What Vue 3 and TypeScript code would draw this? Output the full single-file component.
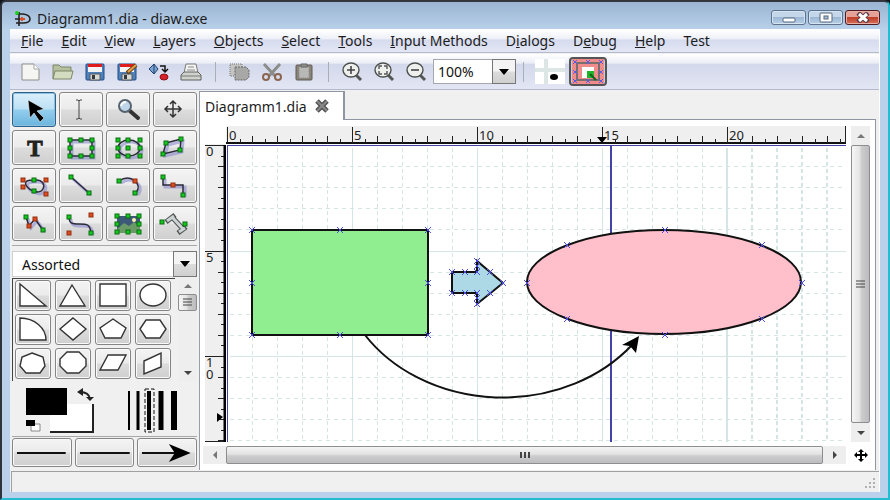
<script setup lang="ts">
import { computed, onBeforeUnmount, onMounted, reactive, ref } from 'vue'

interface Mark { x: number; y: number; red?: boolean }
interface Tool { name: string; path?: string; marks?: Mark[] }

const menus: [string, string, string][] = [
  ['', 'F', 'ile'], ['', 'E', 'dit'], ['', 'V', 'iew'], ['', 'L', 'ayers'],
  ['', 'O', 'bjects'], ['', 'S', 'elect'], ['', 'T', 'ools'], ['', 'I', 'nput Methods'],
  ['D', 'i', 'alogs'], ['D', 'e', 'bug'], ['', 'H', 'elp'], ['Test', '', ''],
]

const g = (x: number, y: number): Mark => ({ x, y })
const r = (x: number, y: number): Mark => ({ x, y, red: true })
const frame = (x0: number, x1: number, x2: number): Mark[] => [
  g(x0, 10), g(x1, 10), g(x2, 10), g(x0, 18), g(x2, 18), g(x0, 26), g(x1, 26), g(x2, 26),
]

const tools: Tool[] = [
  { name: 'Modify' },
  { name: 'Text edit' },
  { name: 'Magnify' },
  { name: 'Scroll' },
  { name: 'Text' },
  { name: 'Box', path: 'M11 10H33V26H11Z', marks: frame(11, 22, 33) },
  { name: 'Ellipse', path: 'M12 18A11 8 0 0 1 34 18A11 8 0 0 1 12 18Z', marks: [...frame(12, 22, 34), g(22, 18)] },
  { name: 'Polygon', path: 'M13 13L28 9L27 20L10 24Z', marks: [g(13, 13), g(28, 9), g(27, 20), g(10, 24)] },
  { name: 'Beziergon', path: 'M22 12C31 11 33 17 31 21C29 25 24 24 22 23C16 22 11 15 15 13C17 12 19 12 22 12Z', marks: [r(11, 12), r(11, 19), r(34, 12), r(34, 26), g(22, 12), g(22, 23)] },
  { name: 'Line', path: 'M12 9L30 25', marks: [g(12, 9), g(30, 25)] },
  { name: 'Arc', path: 'M13 13Q22 7 29 13Q35 18 30 25', marks: [g(13, 13), r(29, 13), g(29, 25)] },
  { name: 'Zigzagline', path: 'M10 9V17H30V27', marks: [g(10, 9), r(20, 17), g(30, 27)] },
  { name: 'Polyline', path: 'M14 11L17 20L23 13L31 24', marks: [g(14, 11), r(17, 20), r(23, 13), g(31, 24)] },
  { name: 'Bezierline', path: 'M10 11C10 18 14 18 20 18C28 18 31 18 32 27', marks: [g(10, 11), r(32, 9), r(10, 27), g(32, 27)] },
  { name: 'Image', marks: frame(11, 22, 33) },
  { name: 'Outline', marks: [g(9, 16), g(32, 18)] },
]
const activeTool = ref('Modify')

const sheet = [
  { name: 'Right triangle', path: 'M5 4V26H31Z' },
  { name: 'Triangle', path: 'M17 5L5 26H30Z' },
  { name: 'Square', path: 'M5 4H31V26H5Z' },
  { name: 'Circle', path: 'M5 15A13 11 0 0 1 31 15A13 11 0 0 1 5 15Z' },
  { name: 'Quarter circle', path: 'M5 4V26H31A26 22 0 0 0 5 4Z' },
  { name: 'Diamond', path: 'M18 4L31 15L18 26L5 15Z' },
  { name: 'Pentagon', path: 'M18 5L31 14L26 24H10L5 14Z' },
  { name: 'Hexagon', path: 'M5 15L11 6H25L31 15L25 24H11Z' },
  { name: 'Heptagon', path: 'M17 5L28 9L30 18L25 25H11L5 18L7 9Z' },
  { name: 'Octagon', path: 'M12 4H24L31 11V18L24 25H12L5 18V11Z' },
  { name: 'Horizontal parallelogram', path: 'M13 7H31L23 22H5Z' },
  { name: 'Vertical parallelogram', path: 'M9 13L26 5V19L9 26Z' },
]

const STEP_X = 25
const STEP_Y = 21.1
const gx = (n: number) => Math.round(n * STEP_X) + 1
const gy = (n: number) => Math.round(n * STEP_Y) + 1
const tickSize = (n: number, major: number) => (n % 5 === 0 ? major : n % 1 === 0 ? 7 : 4)
const range = (count: number, step: number, start = 0) =>
  Array.from({ length: Math.max(0, count) }, (_, i) => start + i * step)

// Rulers and grid cover exactly the visible part of the drawing area.
const canvas = ref<HTMLElement | null>(null)
const size = reactive({ w: 619, h: 297 })
let observer: ResizeObserver | undefined
onMounted(() => {
  observer = new ResizeObserver(([entry]) => {
    size.w = Math.floor(entry.contentRect.width)
    size.h = Math.floor(entry.contentRect.height)
  })
  if (canvas.value) observer.observe(canvas.value)
})
onBeforeUnmount(() => observer?.disconnect())

const columns = computed(() => range(Math.floor(size.w / STEP_X), 1, 1))
const rows = computed(() => range(Math.floor(size.h / STEP_Y), 1, 1))
const ticksX = computed(() => range(Math.floor((size.w * 2) / STEP_X) + 1, 0.5))
const ticksY = computed(() => range(Math.floor((size.h * 2) / STEP_Y) + 1, 0.5))
const labelsX = computed(() => range(Math.floor((size.w - 24) / (STEP_X * 5)) + 1, 5))
const labelsY = computed(() => range(Math.floor((size.h - 30) / (STEP_Y * 5)) + 1, 5))

const anchors: [number, number][] = [
  [26, 86], [114, 86], [202, 86], [26, 139], [202, 139], [26, 191], [114, 191], [202, 191],
  [226, 128], [239, 128], [251, 128], [251, 122], [251, 117], [264, 128], [277, 139],
  [264, 149], [251, 160], [251, 154], [251, 149], [239, 149], [226, 149],
  [301, 139], [576, 139], [439, 86], [439, 191], [341, 101], [536, 101], [341, 175], [536, 175],
]
</script>

<template>
  <div class="window">
    <header class="titlebar">
      <svg class="app-icon" width="18" height="18" viewBox="0 0 18 18">
        <path d="M2 4H9Q16 5 16 9Q16 13 9 13H2M5 2V16M1 9H11" fill="none" stroke="#222" stroke-width="1.6" />
        <path d="M6 9H11M8 7V11" stroke="#d85028" stroke-width="2" />
        <circle cx="3" cy="3" r="2" fill="#1fd01f" />
      </svg>
      <h1>Diagramm1.dia - diaw.exe</h1>
      <div class="winctl">
        <button aria-label="Minimize"><svg width="16" height="11"><rect x="2" y="6" width="12" height="4" rx="1" fill="#fff" stroke="#56687c" /></svg></button>
        <button aria-label="Maximize"><svg width="16" height="11"><rect x="2" y="1" width="12" height="9" rx="1" fill="#fff" stroke="#56687c" /><rect x="6" y="4" width="4" height="3" fill="#a9c0da" stroke="#56687c" /></svg></button>
        <button class="close" aria-label="Close"><svg width="16" height="11"><path d="M3 1L13 10M13 1L3 10" stroke="#5a3a48" stroke-width="5" /><path d="M4 2L12 9M12 2L4 9" stroke="#fff" stroke-width="3" /></svg></button>
      </div>
    </header>

    <div class="client">
      <nav class="menubar">
        <button v-for="m in menus" :key="m.join('')">{{ m[0] }}<u>{{ m[1] }}</u>{{ m[2] }}</button>
      </nav>

      <div class="toolbar">
        <button aria-label="New"><svg viewBox="0 0 24 24"><path d="M3 4H15L20 9V20H3Z" fill="#f5f5f3" stroke="#8d8f8b" /><path d="M15 4V9H20" fill="#fff" stroke="#a5a7a3" /></svg></button>
        <button aria-label="Open"><svg viewBox="0 0 24 24"><path d="M2 19V5H8L10 7H20V11" fill="#b6c09f" stroke="#7c8766" /><path d="M4 11H22L20 19H2Z" fill="#d3dbc0" stroke="#7c8766" /></svg></button>
        <button aria-label="Save"><svg viewBox="0 0 24 24"><rect x="3" y="4" width="18" height="16" rx="1" fill="#4f81bb" stroke="#204a87" /><path d="M5 5H19V12H5Z" fill="#f4f4f4" /><path d="M5 4H19V7H5Z" fill="#e01b1b" /><path d="M7 14H17V20H7Z" fill="#d8dad6" stroke="#55575a" /><path d="M9 15H12V19H9Z" fill="#36393b" /></svg></button>
        <button aria-label="Save as"><svg viewBox="0 0 24 24"><rect x="3" y="4" width="18" height="16" rx="1" fill="#4f81bb" stroke="#204a87" /><path d="M5 5H19V12H5Z" fill="#f4f4f4" /><path d="M5 4H19V7H5Z" fill="#e01b1b" /><path d="M7 14H17V20H7Z" fill="#d8dad6" stroke="#55575a" /><path d="M9 15H12V19H9Z" fill="#36393b" /><path d="M12 13L21 5" stroke="#6b4210" stroke-width="4" /><path d="M13 12L21 5" stroke="#e5a04b" stroke-width="2" /></svg></button>
        <button aria-label="Export"><svg viewBox="0 0 24 24"><path d="M2 9L7 4L11 9L7 14Z" fill="#7ba4d2" stroke="#20416e" /><path d="M7 4V14" stroke="#20416e" /><path d="M13 6H18V11M15 9L18 12L21 9" fill="none" stroke="#111" stroke-width="1.5" /><ellipse cx="17" cy="17" rx="4" ry="3" fill="#d6202a" stroke="#8a0f16" /></svg></button>
        <button aria-label="Print"><svg viewBox="0 0 24 24"><path d="M7 4H17L19 13H5Z" fill="#f4f4f3" stroke="#777975" /><path d="M9 7H15M8 10H16" stroke="#888a85" /><path d="M5 12H19L22 15V20H2V15Z" fill="#d0d2cd" stroke="#60625e" /><path d="M2 16H22" stroke="#777975" /></svg></button>
        <i class="sep"></i>
        <button aria-label="Copy"><svg viewBox="0 0 24 24"><path d="M2 4H14V16H2Z" fill="#c4c4c4" stroke="#777" stroke-dasharray="1 1" /><path d="M7 7H18L21 10V17L18 20H7Z" fill="#a8a8a6" stroke="#666" stroke-dasharray="2 1" /></svg></button>
        <button aria-label="Cut"><svg viewBox="0 0 24 24"><path d="M4 4L15 16M20 4L9 16" stroke="#8b8d8a" stroke-width="3" /><circle cx="6" cy="17" r="3" fill="none" stroke="#8b6450" stroke-width="2" /><circle cx="18" cy="17" r="3" fill="none" stroke="#8b6450" stroke-width="2" /></svg></button>
        <button aria-label="Paste"><svg viewBox="0 0 24 24"><rect x="4" y="5" width="16" height="15" rx="1" fill="#8a857b" stroke="#5f5b55" /><path d="M7 7H17V18H7Z" fill="#b8b8b6" stroke="#8a8a88" stroke-dasharray="1 1" /><path d="M9 4H15V7H9Z" fill="#8f8f8c" stroke="#666" /></svg></button>
        <i class="sep"></i>
        <button aria-label="Zoom in"><svg viewBox="0 0 24 24"><path d="M14 14L20 20" stroke="#555753" stroke-width="3" /><ellipse cx="10" cy="10" rx="8" ry="7" fill="#eef0ee" stroke="#4c4f4b" stroke-width="1.4" /><path d="M6 10H14M10 6V14" stroke="#444" stroke-width="1.6" /></svg></button>
        <button aria-label="Zoom fit"><svg viewBox="0 0 24 24"><path d="M14 14L20 20" stroke="#555753" stroke-width="3" /><ellipse cx="10" cy="10" rx="8" ry="7" fill="#eef0ee" stroke="#4c4f4b" stroke-width="1.4" /><path d="M6 9V6H9M11 6H14V9M14 11V14H11M9 14H6V11" fill="none" stroke="#555" stroke-width="1.4" /></svg></button>
        <button aria-label="Zoom out"><svg viewBox="0 0 24 24"><path d="M14 14L20 20" stroke="#555753" stroke-width="3" /><ellipse cx="10" cy="10" rx="8" ry="7" fill="#eef0ee" stroke="#4c4f4b" stroke-width="1.4" /><path d="M6 10H14" stroke="#444" stroke-width="1.6" /></svg></button>
        <label class="combo zoom">
          <select aria-label="Zoom"><option>100%</option><option>50%</option><option>200%</option></select>
          <span class="drop"><svg width="10" height="6"><path d="M0 0H10L5 6Z" /></svg></span>
        </label>
        <i class="sep last"></i>
        <button class="gridtoggle" aria-label="Snap to grid"><svg width="30" height="25"><path d="M0 0H30V25H0Z" fill="#fff" /><path d="M11 0V25M0 11H30" stroke="#dce6e4" stroke-width="4" /><ellipse cx="19" cy="18" rx="4" ry="3" /></svg></button>
        <button class="snaptoggle" aria-label="Snap to objects" aria-pressed="true">
          <svg width="32" height="25">
            <path d="M0 0H32V25H0Z" fill="#f08c8c" /><path d="M5 4H27V21H5Z" fill="none" stroke="#77706f" stroke-width="2" />
            <path d="M10 8H22V19H10Z" fill="#fff" /><path d="M15 12H22V19H15Z" fill="#20b52a" /><path d="M18 15L24 21" stroke="#14601a" stroke-width="2" />
            <path d="M1 1L5 5M5 1L1 5M14 1L18 5M18 1L14 5M27 1L31 5M31 1L27 5M1 11L5 15M5 11L1 15M27 11L31 15M31 11L27 15M1 20L5 24M5 20L1 24M14 20L18 24M18 20L14 24M27 20L31 24M31 20L27 24" stroke="#5a5ae6" />
          </svg>
        </button>
      </div>

      <main class="body">
        <aside class="sidebar">
          <div class="tools">
            <button v-for="t in tools" :key="t.name" :aria-label="t.name" :class="{ active: t.name === activeTool }" @click="activeTool = t.name">
              <svg viewBox="0 0 44 35">
                <path v-if="t.name === 'Modify'" d="M16 8L18 26L22 21L28 30L32 26L25 19L32 17Z" stroke="#fff" stroke-opacity=".5" />
                <path v-else-if="t.name === 'Text edit'" d="M17 8H19L20 9L21 8H23M20 9V26M17 27H19L20 26L21 27H23" fill="none" stroke="#444" />
                <g v-else-if="t.name === 'Magnify'"><path d="M24 19L32 26" stroke="#333" stroke-width="4" stroke-linecap="round" /><circle cx="19" cy="14" r="6" fill="#bfd5e8" stroke="#56636e" stroke-width="2" /><path d="M15 14Q16 10 20 10" fill="none" stroke="#fff" stroke-width="2" /></g>
                <path v-else-if="t.name === 'Scroll'" d="M20 9V25M12 17H28M17 12L20 9L23 12M17 22L20 25L23 22M15 14L12 17L15 20M25 14L28 17L25 20" fill="none" stroke="#333" stroke-width="1.5" />
                <text v-else-if="t.name === 'Text'" class="glyph" x="23" y="26" text-anchor="middle">T</text>
                <g v-else-if="t.name === 'Image'"><path d="M11 10H34V27H11Z" fill="#3d5878" /><circle cx="28" cy="14" r="2" fill="#fff5b0" /><path d="M11 23L18 17L23 20L28 16L34 21V27H11Z" fill="#6b9a68" /></g>
                <g v-else-if="t.name === 'Outline'"><path d="M19 11L31 24M13 16L22 9M25 27L33 21" stroke="#4d5353" stroke-width="5" /><path d="M19 11L31 24M14 15L21 10M26 26L32 22" stroke="#cdd3d3" stroke-width="3" /></g>
                <g v-if="t.path"><path :d="t.path" class="halo" transform="translate(2 2)" /><path :d="t.path" class="stroke" /></g>
                <rect v-for="(m, i) in t.marks" :key="i" :x="m.x - 2" :y="m.y - 2" width="4" height="4" :class="m.red ? 'red' : 'green'" />
              </svg>
            </button>
          </div>
          <label class="combo sheetname">
            <select aria-label="Sheet"><option>Assorted</option><option>Flowchart</option><option>UML</option></select>
            <span class="drop"><svg width="10" height="6"><path d="M0 0H10L5 6Z" /></svg></span>
          </label>
          <div class="sheet">
            <div class="shapes">
              <button v-for="s in sheet" :key="s.name" :aria-label="s.name"><svg viewBox="0 0 36 31"><path :d="s.path" /></svg></button>
            </div>
            <div class="vscroll mini">
              <button aria-label="Scroll up"><svg width="10" height="6"><path d="M1 5H9L5 1Z" fill="#777" /></svg></button>
              <div class="thumb"><svg width="9" height="9"><path d="M0 1H9M0 4H9M0 7H9" stroke="#444" /></svg></div>
              <button class="end" aria-label="Scroll down"><svg width="10" height="6"><path d="M1 1H9L5 5Z" fill="#444" /></svg></button>
            </div>
          </div>
          <div class="attributes">
            <svg class="colors" width="72" height="48">
              <path d="M25 16H69V44H25Z" fill="#fff" /><path d="M25 44H68V16" fill="none" stroke="#222" stroke-width="2" />
              <path d="M1 0H42V27H1Z" fill="#000" />
              <path d="M6 36H15V43H6Z" fill="#fff" stroke="#888" /><path d="M1 32H10V38H1Z" />
              <path d="M55 4Q64 4 65 11" fill="none" stroke="#222" stroke-width="2" /><path d="M52 4L58 0V8ZM61 9H69L65 13Z" fill="#222" />
            </svg>
            <svg class="widths" width="52" height="46">
              <path d="M2 3V42" stroke="#000" stroke-width="2" /><path d="M11 3V42" stroke="#000" stroke-width="3" />
              <path d="M22 3V42" stroke="#000" stroke-width="4" /><path d="M34 3V42" stroke="#000" stroke-width="5" /><path d="M47 3V42" stroke="#000" stroke-width="6" />
              <path d="M18 1H27V44H18Z" fill="none" stroke="#111" stroke-dasharray="4 2" />
            </svg>
          </div>
          <div class="lines">
            <button aria-label="Start arrow"><svg viewBox="0 0 58 28"><path d="M4 14H53" stroke="#111" stroke-width="2" /></svg></button>
            <button aria-label="Line style"><svg viewBox="0 0 58 28"><path d="M4 14H54" stroke="#111" stroke-width="2" /></svg></button>
            <button aria-label="End arrow"><svg viewBox="0 0 58 28"><path d="M4 14H44" stroke="#111" stroke-width="2" /><path d="M53 14L31 5L37 14L31 23Z" /></svg></button>
          </div>
        </aside>

        <section class="notebook">
          <div class="tabs">
            <div class="tab">Diagramm1.dia
              <button aria-label="Close tab"><svg width="16" height="14"><path d="M3 2L13 12M13 2L3 12" stroke="#555" stroke-width="5" /><path d="M3 2L13 12M13 2L3 12" stroke="#888" stroke-width="2" /></svg></button>
            </div>
          </div>
          <div class="page">
            <svg class="ruler-h" width="100%" height="18">
              <path :d="`M0 17H${size.w}`" stroke="#111" stroke-width="2" />
              <path v-for="n in ticksX" :key="n" :d="`M${gx(n)} 17V${17 - tickSize(n, 16)}`" class="tick" />
              <path :d="`M${size.w - 1} 17V0`" class="tick" />
              <text v-for="n in labelsX" :key="'l' + n" :x="gx(n) + 2" y="14">{{ n }}</text>
              <path d="M371 11H381L376 17Z" />
            </svg>
            <svg class="ruler-v" width="21" height="100%">
              <path v-for="n in ticksY" :key="n" :d="`M20 ${gy(n)}H${20 - tickSize(n, 20)}`" class="tick" />
              <path :d="`M20 ${size.h - 1}H0`" class="tick" />
              <path :d="`M20 1V${size.h}`" stroke="#000" stroke-width="3" />
              <template v-for="n in labelsY" :key="'v' + n">
                <text v-for="(c, i) in String(n)" :key="i" x="1" :y="gy(n) + 11 + i * 12">{{ c }}</text>
              </template>
              <path d="M12 269V278L18 273Z" />
            </svg>
            <div ref="canvas" class="canvas">
              <svg width="100%" height="100%">
                <path v-for="n in columns" :key="'c' + n" :d="`M${gx(n)} 4V${size.h}`" :class="['grid', { down: n % 5, wide: n > 19 }]" />
                <path v-for="n in rows" :key="'r' + n" :d="`M4 ${gy(n)}H${size.w}`" :class="['grid', { across: n % 5 }]" />
                <path :d="`M1 ${size.h}V1H${size.w}`" class="pageline" />
                <path :d="`M385 1V${size.h}`" class="pageline guide" />
                <path d="M26 86H202V191H26Z" fill="#90ee90" class="shape" />
                <path d="M226 128H251V117L277 139L251 160V149H226Z" fill="#add8e6" class="shape" />
                <ellipse cx="438" cy="138" rx="137" ry="52" fill="#ffc0cb" class="shape" />
                <path d="M139 191A165 139 0 0 0 406 201" fill="none" class="shape" />
                <path d="M413 192L396 201L404 202L410 209Z" />
                <path v-for="(a, i) in anchors" :key="i" :d="`M${a[0] - 3} ${a[1] - 3}l6 6m0 -6l-6 6`" class="anchor" />
              </svg>
            </div>
            <div class="vscroll main">
              <button aria-label="Scroll up"><svg width="10" height="6"><path d="M1 5H9L5 1Z" fill="#777" /></svg></button>
              <div class="thumb"><svg width="9" height="9"><path d="M0 1H9M0 4H9M0 7H9" stroke="#444" /></svg></div>
              <button class="end" aria-label="Scroll down"><svg width="10" height="6"><path d="M1 1H9L5 5Z" fill="#444" /></svg></button>
            </div>
            <div class="hscroll">
              <button aria-label="Scroll left"><svg width="6" height="10"><path d="M5 1V9L1 5Z" fill="#777" /></svg></button>
              <div class="thumb"><svg width="10" height="8"><path d="M1 1V7M5 1V7M9 1V7" stroke="#444" stroke-width="2" /></svg></div>
              <button aria-label="Scroll right"><svg width="6" height="10"><path d="M1 1V9L5 5Z" fill="#444" /></svg></button>
            </div>
            <button class="navigate" aria-label="Navigate"><svg width="14" height="13"><path d="M7 2V11M2 6H12" stroke="#000" stroke-width="2" /><path d="M7 0L10 3H4ZM7 13L10 10H4ZM0 6L3 3V9ZM14 6L11 3V9Z" /></svg></button>
          </div>
        </section>
      </main>

      <footer class="status">
        <svg width="12" height="11"><path d="M9 1H11M9 5H11M9 9H11M5 5H7M5 9H7M1 9H3" stroke="#b0b0b0" stroke-width="2" /></svg>
      </footer>
    </div>
  </div>
</template>

<style>
body { background: #10181e; }
</style>

<style scoped>
.window, .window * { box-sizing: border-box; }
.window {
  min-height: 100vh; display: flex; flex-direction: column; padding: 0 8px 6px;
  border: 2px solid; border-color: #33363c #25bcd2 #25bcd2 #30343a; border-radius: 6px 6px 0 0;
  background: linear-gradient(#9ab4d2, #b9d1ea 28px);
  font-family: "Noto Sans", "Open Sans", sans-serif; font-size: 14px; color: #1c1c1c;
}
button { margin: 0; padding: 0; border: 0; background: none; font: inherit; color: inherit; display: flex; align-items: center; justify-content: center; }
svg { display: block; }
.titlebar { height: 27px; display: flex; align-items: center; gap: 5px; padding: 6px 0 0 4px; }
.titlebar h1 { flex: 1; margin: 0; font-size: 14px; line-height: 20px; font-weight: 400; }
.winctl { display: flex; gap: 2px; padding-bottom: 2px; }
.winctl button { width: 35px; height: 15px; border: 1px solid #5c7390; border-radius: 3px; background: linear-gradient(#c4d6ea 45%, #9db8d5 50%, #b8d0e8); box-shadow: inset 0 0 0 1px #d6e4f2; }
.winctl .close { border-color: #4c1c22; background: linear-gradient(#e5a196 45%, #bf3f28 50%, #d5705a); box-shadow: inset 0 0 0 1px #e9aea4; }
.client { flex: 1; display: flex; flex-direction: column; background: #f0f0f0; border-top: 1px solid #fff; border-right: 1px solid #fff; }
.menubar { height: 23px; display: flex; flex-wrap: wrap; overflow: hidden; gap: 18px; padding: 0 11px; background: linear-gradient(#fff, #eef0f8 40%, #d6dbee 45%, #e2e6f4); border-bottom: 1px solid #b4bacb; }
.menubar button { height: 22px; line-height: 22px; display: block; white-space: nowrap; }
.toolbar { height: 36px; display: flex; align-items: center; margin-top: 1px; padding: 0 5px; background: linear-gradient(#fff, #edeff7 25%, #d3d8eb 30%, #e2e6f4); border-bottom: 1px solid #b4bacb; }
.toolbar button { width: 32px; height: 30px; flex: none; }
.toolbar button > svg:not([width]) { width: 24px; height: 24px; }
.sep { flex: none; width: 1px; height: 20px; margin: 0 8px; background: #a9aebb; }
.sep.last { margin: 0 10px 0 7px; }
.combo { display: grid; flex: none; }
.combo select, .combo .drop { grid-row: 1; grid-column: 1; }
.combo select { appearance: none; width: 100%; height: 100%; margin: 0; padding: 0 26px 0 4px; border: 1px solid #a5a8b0; border-radius: 0; background: #fff; color: #111; font: inherit; }
.combo .drop { justify-self: end; width: 24px; display: flex; align-items: center; justify-content: center; pointer-events: none; border: 1px solid #777; background: linear-gradient(#f4f4f4 48%, #dcdcdc 52%, #cfcfcf); }
.zoom { width: 83px; height: 25px; }
.toolbar .snaptoggle { width: 38px; height: 29px; margin-left: 3px; border: 2px solid #555; border-radius: 4px; background: #c9cdd8; overflow: hidden; }
.body { flex: 1; display: flex; padding: 1px 3px 1px 0; }
.sidebar { width: 190px; flex: none; display: flex; flex-direction: column; padding: 1px 2px 0 2px; border-right: 1px solid #999da8; }
.tools { display: grid; grid-template-columns: repeat(4, minmax(0, 1fr)); gap: 3px; padding-bottom: 4px; border-bottom: 1px solid #a8a8a8; }
.tools button, .shapes button, .lines button { border: 1px solid #858585; border-radius: 3px; background: linear-gradient(#f4f4f4, #ebebeb 48%, #dcdcdc 52%, #cfcfcf); box-shadow: inset 0 0 0 1px #fafafa; }
.tools button { height: 35px; }
.tools svg { width: 44px; height: 35px; flex: none; }
.tools .active { border-color: #2c628b; background: linear-gradient(#dbeffb, #bce0f5 48%, #93cdee 52%, #6bb5dd); box-shadow: inset 0 0 0 1px #8cc0de; }
.glyph { font: bold 23px "Liberation Serif", serif; fill: #222; stroke: #222; }
.halo { fill: none; stroke: #8b8bd0; stroke-width: 3; opacity: .6; }
.stroke { fill: none; stroke: #2a2a3a; stroke-width: 1.5; }
.green { fill: #14c81e; stroke: #0a6d10; }
.red { fill: #e04a1c; stroke: #8f3013; }
.sheetname { height: 26px; margin-top: 5px; }
.sheetname select { padding-left: 9px; border-color: #d0d0d0; }
.sheet { height: 103px; margin-top: 1px; display: flex; gap: 3px; }
.shapes { flex: 1; display: grid; grid-template-columns: repeat(4, 36px); grid-auto-rows: 31px; align-content: start; gap: 3px 4px; padding: 1px 0 0 2px; border: solid #444; border-width: 1px 0 0 1px; overflow: hidden; }
.shapes svg { width: 36px; height: 31px; flex: none; }
.shapes path { fill: #fff; stroke: #333; stroke-width: 1.4; }
.vscroll { display: flex; flex-direction: column; background: #eee; }
.vscroll button { height: 19px; flex: none; }
.vscroll .end { margin-top: auto; }
.vscroll .thumb, .hscroll .thumb { display: flex; align-items: center; justify-content: center; border: 1px solid #8d8d8d; border-radius: 2px; }
.vscroll .thumb { background: linear-gradient(90deg, #f6f6f6, #e4e4e4 45%, #cdcdcd 55%, #bcbcc0); }
.mini { width: 19px; }
.mini button { height: 16px; }
.mini .thumb { height: 17px; }
.attributes { height: 56px; display: flex; justify-content: space-between; padding: 7px 18px 0 13px; border-bottom: 1px solid #a8a8a8; }
.lines { display: grid; grid-template-columns: repeat(3, minmax(0, 1fr)); gap: 3px; padding-top: 1px; }
.lines button { height: 29px; }
.lines svg { width: 58px; height: 28px; }
.notebook { flex: 1; min-width: 0; display: flex; flex-direction: column; }
.tabs { display: flex; height: 29px; }
.tabs::after { content: ""; flex: 1; border-bottom: 1px solid #9095a2; }
.tab { display: flex; align-items: center; gap: 7px; padding: 0 13px 0 5px; background: #fff; border-top: 1px solid #9095a2; border-right: 2px solid #9095a2; white-space: nowrap; }
.page { flex: 1; min-height: 0; display: grid; grid-template-columns: 23px minmax(0, 1fr) 5px 19px; grid-template-rows: 18px minmax(297px, 1fr) 4px 18px; padding: 6px 5px 6px 3px; background: #fff; border-right: 1px solid #9095a2; }
.ruler-h { grid-area: 1 / 2; background: #efefef; }
.ruler-v { grid-area: 2 / 1; justify-self: end; background: #efefef; }
.ruler-h text, .ruler-v text { font-size: 13px; fill: #222; }
.tick { stroke: #222; stroke-width: 1; shape-rendering: crispEdges; }
.canvas { grid-area: 2 / 2; position: relative; overflow: hidden; }
.canvas svg { position: absolute; inset: 0; }
.grid { fill: none; stroke: #d5e5e3; shape-rendering: crispEdges; }
.grid.wide { stroke-width: 2; }
.grid.down { stroke-dasharray: 4 3; }
.grid.across { stroke-dasharray: 4 4; }
.pageline { fill: none; stroke: #4242a8; shape-rendering: crispEdges; }
.guide { stroke-width: 2; }
.shape { stroke: #111; stroke-width: 2; }
.anchor { stroke: #4a4ae0; stroke-width: 1; }
.main { grid-area: 1 / 4 / 3 / 5; }
.main .thumb { flex: 1; }
.hscroll { grid-area: 4 / 1 / 5 / 3; display: flex; background: #eee; }
.hscroll button { width: 23px; flex: none; }
.hscroll .thumb { flex: 1; background: linear-gradient(#f4f4f4, #e2e2e2 45%, #cdcdcd 55%, #bdbdc0); }
.navigate { grid-area: 4 / 4; }
.status { height: 21px; display: flex; align-items: flex-end; justify-content: flex-end; margin-left: 1px; padding: 0 3px 3px; border-top: 1px solid #a0a0a0; border-left: 1px solid #a0a0a0; }
</style>
